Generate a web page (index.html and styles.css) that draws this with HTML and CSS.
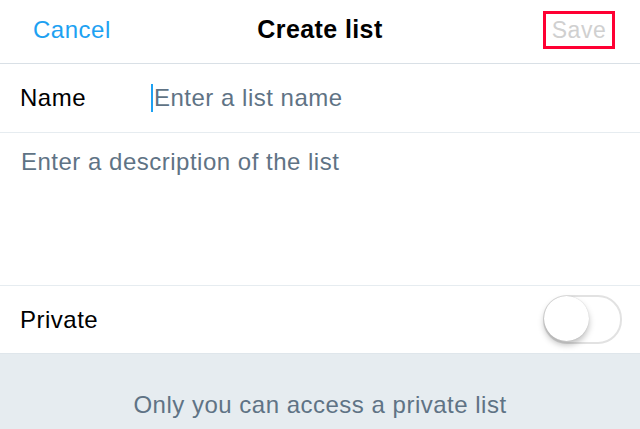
FILE: index.html
```html
<!DOCTYPE html>
<html>
<head>
<meta charset="utf-8">
<link rel="stylesheet" href="styles.css">
</head>
<body>
<div class="screen">
  <header class="nav">
    <span class="nav-cancel">Cancel</span>
    <span class="nav-title">Create list</span>
    <span class="nav-save">Save</span>
  </header>
  <div class="row name-row">
    <span class="label">Name</span>
    <span class="field"><span class="caret"></span><span class="placeholder">Enter a list name</span></span>
  </div>
  <div class="desc">
    <span class="placeholder">Enter a description of the list</span>
  </div>
  <div class="row private-row">
    <span class="label">Private</span>
    <span class="switch"><span class="knob"></span></span>
  </div>
  <div class="footer">
    <span class="footer-text">Only you can access a private list</span>
  </div>
</div>
</body>
</html>
```

FILE: styles.css
```css
html, body {
  margin: 0;
  padding: 0;
  background: #ffffff;
}
.screen {
  width: 640px;
  height: 429px;
  display: flex;
  flex-direction: column;
  font-family: "Liberation Sans", Arial, sans-serif;
  font-size: 24px;
  letter-spacing: 0.5px;
  color: #14171a;
  overflow: hidden;
}
.nav {
  border-bottom: 1px solid #d9e0e6;
  display: flex;
  align-items: center;
  justify-content: space-between;
  padding: 0 28px 4px 33px;
  box-sizing: content-box;
  height: 59px;
  position: relative;
}
.nav-cancel {
  color: #1da1f2;
}
.nav-title {
  font-weight: bold;
  font-size: 25px;
  letter-spacing: 0.4px;
  color: #000;
  position: absolute;
  left: 0;
  right: 0;
  text-align: center;
  top: 15px;
}
.nav-save {
  color: #d0d0d0;
  font-size: 23px;
  outline: 3px solid #ff0033;
  outline-offset: 0;
  width: 66px;
  text-align: center;
  line-height: 32px;
}
.row {
  display: flex;
  align-items: center;
  padding: 0 20px;
}
.name-row {
  height: 68px;
  border-bottom: 1px solid #e6ecf0;
}
.label {
  color: #000;
}
.name-row .label {
  width: 131px;
}
.field {
  display: flex;
  align-items: center;
}
.caret {
  width: 2px;
  height: 28px;
  background: #1da1f2;
  margin-right: 1px;
}
.placeholder {
  color: #5f7385;
}
.desc {
  height: 153px;
  border-bottom: 1px solid #e6ecf0;
  padding: 15px 21px 0;
  box-sizing: border-box;
}
.private-row {
  height: 67px;
  border-bottom: 1px solid #dfe6eb;
  justify-content: space-between;
  padding-right: 18px;
}
.switch {
  width: 75px;
  height: 45px;
  border-radius: 24px;
  border: 2px solid #e2e2e2;
  position: relative;
  background: #fff;
}
.knob {
  position: absolute;
  left: -1px;
  top: -1px;
  width: 45px;
  height: 45px;
  border-radius: 50%;
  background: #fff;
  box-shadow: 0 4px 6px rgba(0,0,0,0.25), 0 0 1px rgba(0,0,0,0.2);
}
.footer {
  flex: 1;
  background: #e6ecf0;
  display: flex;
  justify-content: center;
  padding-top: 37px;
  box-sizing: border-box;
}
.footer-text {
  color: #5f7385;
}
```
